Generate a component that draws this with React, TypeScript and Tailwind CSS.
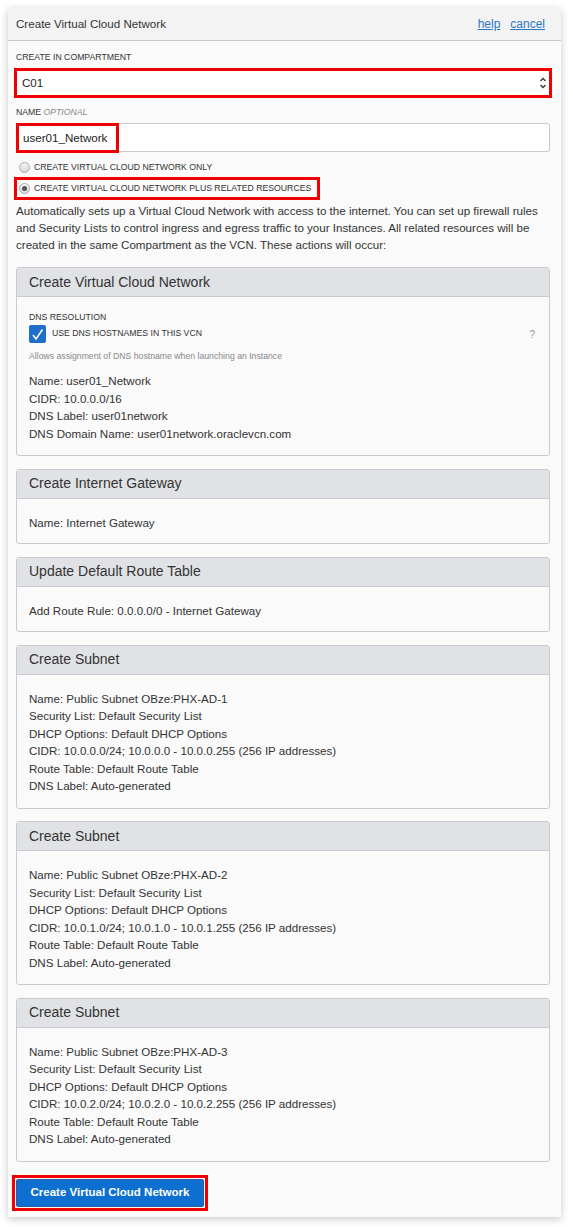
const font = { fontFamily: '"Liberation Sans", Arial, sans-serif' };

type Card = { title: string; lines: string[] };

const cards: Card[] = [
  { title: "Create Internet Gateway", lines: ["Name: Internet Gateway"] },
  { title: "Update Default Route Table", lines: ["Add Route Rule: 0.0.0.0/0 - Internet Gateway"] },
  ...[1, 2, 3].map((n) => ({
    title: "Create Subnet",
    lines: [
      `Name: Public Subnet OBze:PHX-AD-${n}`,
      "Security List: Default Security List",
      "DHCP Options: Default DHCP Options",
      `CIDR: 10.0.${n - 1}.0/24; 10.0.${n - 1}.0 - 10.0.${n - 1}.255 (256 IP addresses)`,
      "Route Table: Default Route Table",
      "DNS Label: Auto-generated",
    ],
  })),
];

function Radio({ checked }: { checked?: boolean }) {
  return (
    <span className="flex h-[11px] w-[11px] shrink-0 items-center justify-center rounded-full border border-[#a9a9a9] bg-[linear-gradient(180deg,#f4f4f4,#d9d9d9)]">
      {checked && <span className="h-[5px] w-[5px] rounded-full bg-[#555]" />}
    </span>
  );
}

function Section({ title, children }: { title: string; children: React.ReactNode }) {
  return (
    <div className="mb-[12.5px] rounded-[3px] border border-[#c8ccd0] bg-[#fafafa]">
      <div className="flex h-[29px] items-center border-b border-[#c8ccd0] bg-[#e0e2e5] px-3 text-[14px] text-[#333]">
        {title}
      </div>
      {children}
    </div>
  );
}

export default function App() {
  return (
    <div className="min-h-screen bg-white p-2" style={font}>
      <div className="w-[553px] bg-[#fafafa] pb-[6px] shadow-[0_2px_8px_rgba(0,0,0,0.22)]">
        <div className="flex h-[33px] items-center justify-between border-b border-[#c9c9c9] bg-[#f3f3f3] pl-2 pr-[16px] text-[11.6px] text-[#333]">
          <span>Create Virtual Cloud Network</span>
          <div className="flex gap-[10px] text-[12px] text-[#2a76c6] underline">
            <span>help</span>
            <span>cancel</span>
          </div>
        </div>

        <div className="pl-2 pr-[11px]">
          <div className="pt-[11px] text-[8.7px] leading-[11px] text-[#333]">CREATE IN COMPARTMENT</div>
          <div className="-mx-[2px] mt-[5px] border-[3px] border-[#f00000]">
            <div className="flex h-[24px] items-center justify-between bg-white pl-[5px] pr-[2px] text-[11.6px] text-[#222]">
              <span>C01</span>
              <svg width="8" height="14" viewBox="0 0 8 14" fill="none" stroke="#333" strokeWidth="1.3">
                <path d="M1.5 5 L4 2.5 L6.5 5" />
                <path d="M1.5 9 L4 11.5 L6.5 9" />
              </svg>
            </div>
          </div>

          <div className="mt-[9px] text-[8.7px] leading-[11px] text-[#333]">
            NAME <span className="italic text-[#888]">OPTIONAL</span>
          </div>
          <div className="relative mt-[5px] flex h-[29px] items-center rounded-[3px] border border-[#c9c9c9] bg-white pl-[6px] text-[11.6px] text-[#222]">
            user01_Network
            <div className="absolute -left-[1px] -top-[1px] h-[30px] w-[103px] border-[3px] border-[#f00000]" />
          </div>

          <div className="mt-[10px] flex items-center gap-[4px] pl-[3px] text-[8.7px] leading-[11px] text-[#333]">
            <Radio />
            <span>CREATE VIRTUAL CLOUD NETWORK ONLY</span>
          </div>
          <div className="-ml-[2px] mt-[4px] flex h-[23px] w-[306px] items-center gap-[4px] border-[3px] border-[#f00000] pl-[2px] text-[8.7px] leading-[11px] text-[#333]">
            <Radio checked />
            <span className="whitespace-nowrap">CREATE VIRTUAL CLOUD NETWORK PLUS RELATED RESOURCES</span>
          </div>
          <p className="mt-[2px] text-[11.6px] leading-[17px] text-[#333]">
            Automatically sets up a Virtual Cloud Network with access to the internet. You can set up firewall rules
            and Security Lists to control ingress and egress traffic to your Instances. All related resources will be
            created in the same Compartment as the VCN. These actions will occur:
          </p>

          <div className="mt-[14px]">
            <Section title="Create Virtual Cloud Network">
              <div className="px-3 pb-[13px] pt-[15px] text-[#333]">
                <div className="text-[8.7px] leading-[11px]">DNS RESOLUTION</div>
                <div className="mt-[2px] flex items-center">
                  <span className="flex h-[18px] w-[17px] items-center justify-center rounded-[2px] bg-[#1d6fcb]">
                    <svg width="13" height="13" viewBox="0 0 13 13" fill="none" stroke="white" strokeWidth="1.6">
                      <path d="M2 7 L5 11 L11.5 1.5" />
                    </svg>
                  </span>
                  <span className="ml-[6px] flex-1 text-[8.7px]">USE DNS HOSTNAMES IN THIS VCN</span>
                  <span className="mr-[2px] text-[10px] text-[#999]">?</span>
                </div>
                <div className="mt-[8px] text-[8.7px] leading-[10px] text-[#888]">
                  Allows assignment of DNS hostname when launching an Instance
                </div>
                <div className="mt-[11px] text-[11.6px] leading-[17.5px]">
                  <div>Name: user01_Network</div>
                  <div>CIDR: 10.0.0.0/16</div>
                  <div>DNS Label: user01network</div>
                  <div>DNS Domain Name: user01network.oraclevcn.com</div>
                </div>
              </div>
            </Section>

            {cards.map((c, i) => (
              <Section key={i} title={c.title}>
                <div
                  className={
                    c.lines.length > 1
                      ? "px-3 pb-[13px] pt-[15px] text-[11.6px] leading-[17.5px] text-[#333]"
                      : "px-3 pb-[12px] pt-[15px] text-[11.6px] leading-[17.5px] text-[#333]"
                  }
                >
                  {c.lines.map((l) => (
                    <div key={l}>{l}</div>
                  ))}
                </div>
              </Section>
            ))}
          </div>

          <div className="-ml-[4px] mt-[1px] inline-block border-[3px] border-[#f00000] p-[1px]">
            <button className="h-[28px] w-[188px] rounded-[2px] border border-[#2a5fa8] bg-[#0d6fd0] text-[11.5px] font-bold text-white">
              Create Virtual Cloud Network
            </button>
          </div>
        </div>
      </div>
    </div>
  );
}
